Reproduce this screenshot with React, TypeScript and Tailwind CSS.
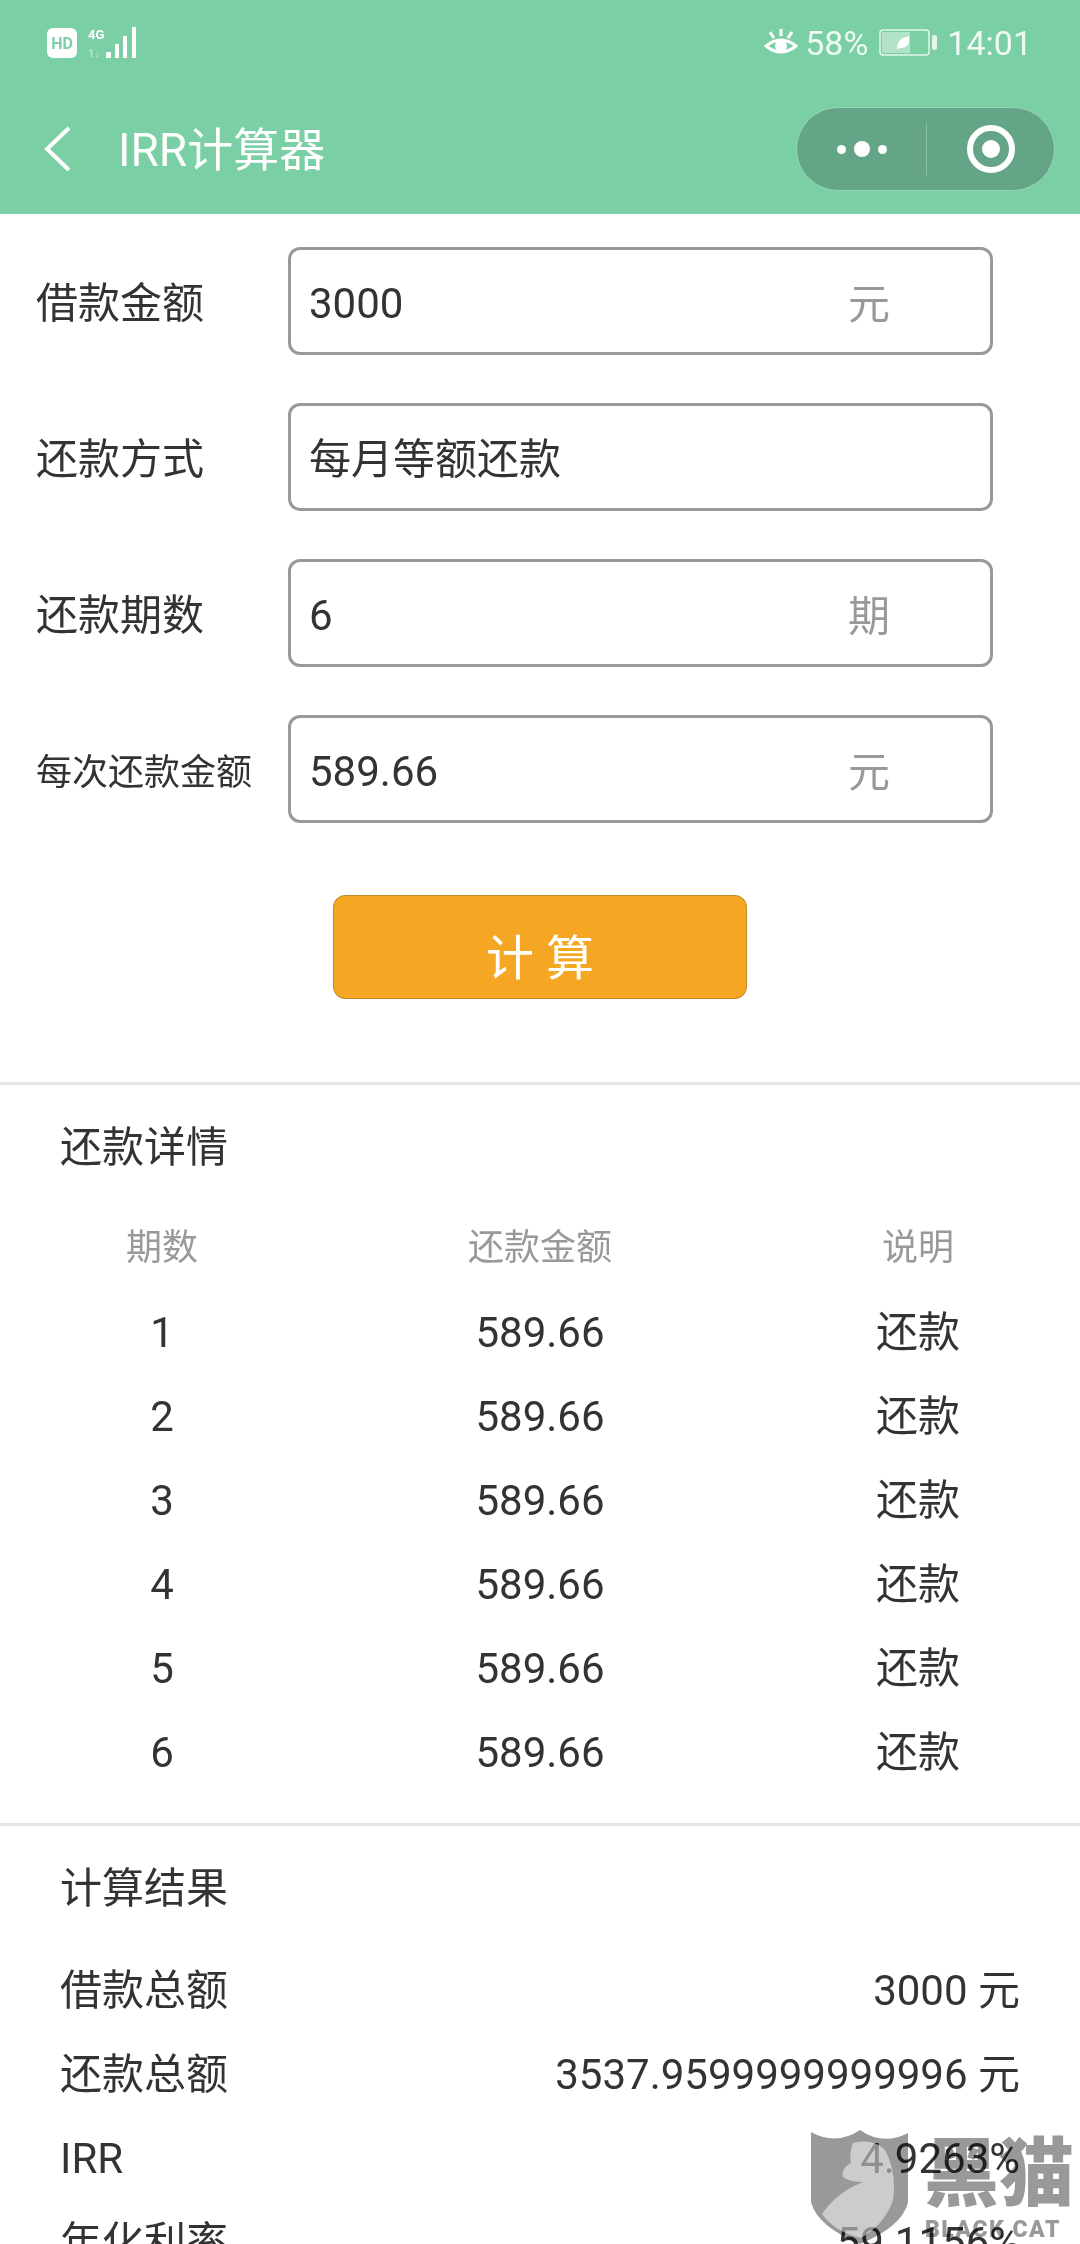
import React from "react";

const FONT = "[font-family:Roboto,'Noto_Sans_CJK_SC',sans-serif]";

function Field({ label, value, unit, small }: { label: string; value: string; unit?: string; small?: boolean }) {
  return (
    <div className="flex items-center h-[108px] mb-[48px]">
      <div className={`w-[252px] text-[#333] ${small ? "text-[36px] pt-[8px]" : "text-[42px] pt-[5px]"}`}>{label}</div>
      <div className="w-[705px] h-full border-[3px] border-[#999] rounded-[12px] flex items-center pl-[18px] pt-[5px] text-[42px] text-[#333]">
        <span className="flex-1">{value}</span>
        {unit && <span className="w-[142px] text-[#999] pt-[2px]">{unit}</span>}
      </div>
    </div>
  );
}

function Cell({ a, b, c, gray }: { a: string; b: string; c: string; gray?: boolean }) {
  return (
    <div className={`flex items-center h-[84px] pt-[2px] ${gray ? "text-[36px] text-[#999]" : "text-[42px] text-[#333]"}`}>
      <div className="w-[324px] text-center">{a}</div>
      <div className="w-[432px] text-center">{b}</div>
      <div className="w-[324px] text-center">{c}</div>
    </div>
  );
}

function Result({ label, value }: { label: string; value: string }) {
  return (
    <div className="flex justify-between items-center h-[84px] px-[60px] pt-[4px] text-[42px] text-[#333] shrink-0">
      <span>{label}</span>
      <span>{value}</span>
    </div>
  );
}

export default function App() {
  return (
    <div className={`relative w-[1080px] h-[2244px] overflow-hidden bg-white ${FONT}`}>
      <header className="h-[214px] bg-[#7bcfa5] text-white flex flex-col">
        <div className="h-[84px] flex items-center justify-between pl-[47px] pr-[48px] pt-[2px]">
          <div className="flex items-center gap-[11px]">
            <svg width="30" height="30" viewBox="0 0 30 30">
              <rect x="0" y="0" width="30" height="30" rx="6" fill="#fff" />
              <text x="15" y="21" textAnchor="middle" fontSize="16" fontWeight="700" fill="#7bcfa5" fontFamily="Roboto">HD</text>
            </svg>
            <svg width="49" height="32" viewBox="0 0 49 32">
              <text x="0" y="12" fontSize="13" fontWeight="700" fill="#fff" fontFamily="Roboto">4G</text>
              <text x="0" y="30" fontSize="11" fontWeight="700" fill="#b5e5cd" fontFamily="Roboto">1↓</text>
              <rect x="18" y="25" width="5" height="6" rx="1" fill="#fff" />
              <rect x="27" y="17" width="4" height="14" fill="#fff" />
              <rect x="35" y="9" width="4" height="22" fill="#fff" />
              <rect x="44" y="0" width="4" height="31" fill="#fff" />
            </svg>
          </div>
          <div className="flex items-center text-[34px] text-[#eefaf3]">
            <svg width="34" height="30" viewBox="0 0 34 30" fill="none" stroke="#fff" strokeWidth="3">
              <path d="M2 18 Q17 6 32 18 Q17 30 2 18 Z" />
              <circle cx="17" cy="18" r="6" fill="#fff" stroke="none" />
              <path d="M17 1v7M6 4l4 6M28 4l-4 6" />
            </svg>
            <span className="ml-[7px]">58%</span>
            <svg className="ml-[11px]" width="58" height="28" viewBox="0 0 58 28" fill="none">
              <rect x="1" y="1" width="49" height="25" rx="3" stroke="#e4f6ec" strokeWidth="1.5" />
              <rect x="3" y="3" width="28" height="21" fill="#b0e3c9" />
              <path d="M18 20 Q18 9 30 7 Q32 18 22 19 Z" fill="#fff" />
              <rect x="53" y="6" width="5" height="15" rx="2" fill="#e4f6ec" />
            </svg>
            <span className="ml-[10px]">14:01</span>
          </div>
        </div>
        <div className="flex-1 flex items-center justify-between pl-[44px] pr-[25px]">
          <div className="flex items-center">
            <svg width="28" height="46" viewBox="0 0 28 46" fill="none" stroke="#fff" strokeWidth="4">
              <path d="M25 2 L3 23 L25 44" />
            </svg>
            <span className="ml-[46px] pt-[2px] text-[46px]">IRR计算器</span>
          </div>
          <div className="w-[259px] h-[84px] rounded-full bg-[#63a586] border-[1.5px] border-[#95d5b4] flex items-center">
            <div className="w-[129px] flex items-center justify-center gap-[8px]">
              <span className="w-[9px] h-[9px] rounded-full bg-white" />
              <span className="w-[16px] h-[16px] rounded-full bg-white" />
              <span className="w-[9px] h-[9px] rounded-full bg-white" />
            </div>
            <div className="w-px h-[52px] bg-[#8cc4a8]" />
            <div className="flex-1 flex items-center justify-center">
              <div className="w-[48px] h-[48px] rounded-full border-[6px] border-white flex items-center justify-center">
                <span className="w-[18px] h-[18px] rounded-full bg-white" />
              </div>
            </div>
          </div>
        </div>
      </header>

      <section className="pl-[36px] pt-[33px]">
        <Field label="借款金额" value="3000" unit="元" />
        <Field label="还款方式" value="每月等额还款" />
        <Field label="还款期数" value="6" unit="期" />
        <Field label="每次还款金额" value="589.66" unit="元" small />
      </section>

      <div className="flex justify-center mt-[24px] mb-[83px] pt-[24px]">
        <button className="w-[414px] h-[104px] rounded-[12px] bg-[#f5a623] border-[1.5px] border-[#c08a2c] text-white text-[48px] tracking-[12px] pl-[12px] pt-[24px]">
          计算
        </button>
      </div>

      <section className="border-t-[3px] border-[#e5e5e5] h-[741px]">
        <div className="h-[120px] pl-[60px] pt-[4px] flex items-center text-[42px] text-[#333]">还款详情</div>
        <Cell a="期数" b="还款金额" c="说明" gray />
        {["1", "2", "3", "4", "5", "6"].map((n) => (
          <Cell key={n} a={n} b="589.66" c="还款" />
        ))}
      </section>

      <section className="border-t-[3px] border-[#e5e5e5]">
        <div className="h-[120px] pl-[60px] pt-[4px] flex items-center text-[42px] text-[#333]">计算结果</div>
        <Result label="借款总额" value="3000 元" />
        <Result label="还款总额" value="3537.9599999999996 元" />
        <Result label="IRR" value="4.9263%" />
        <Result label="年化利率" value="59.1156%" />
      </section>

      <div className="absolute left-[811px] top-[2130px] w-[269px] h-[114px] pointer-events-none">
        <svg className="absolute left-0 top-0 mix-blend-multiply" width="97" height="114" viewBox="0 0 97 114">
          <path d="M0 2 Q25 16 49 0 Q72 16 97 3 V72 Q92 96 49 114 Q6 96 0 72 Z" fill="#999" />
        </svg>
        <svg className="absolute left-0 top-0 opacity-50" width="97" height="114" viewBox="0 0 97 114">
          <path d="M42 13 Q62 8 74 20 Q86 42 82 70 Q74 94 50 108 Q24 102 11 84 Q26 62 52 52 Q38 52 32 47 Q30 38 40 33 Q38 22 42 13 Z" fill="#fff" />
        </svg>
        <div className="absolute left-[113px] top-[4px] text-[75px] leading-[80px] font-black whitespace-nowrap text-[#999] mix-blend-multiply">黑猫</div>
        <div className="absolute left-[114px] top-[88px] text-[23px] leading-[24px] font-black tracking-[1.5px] whitespace-nowrap text-[#999] mix-blend-multiply">BLACK CAT</div>
      </div>
    </div>
  );
}
